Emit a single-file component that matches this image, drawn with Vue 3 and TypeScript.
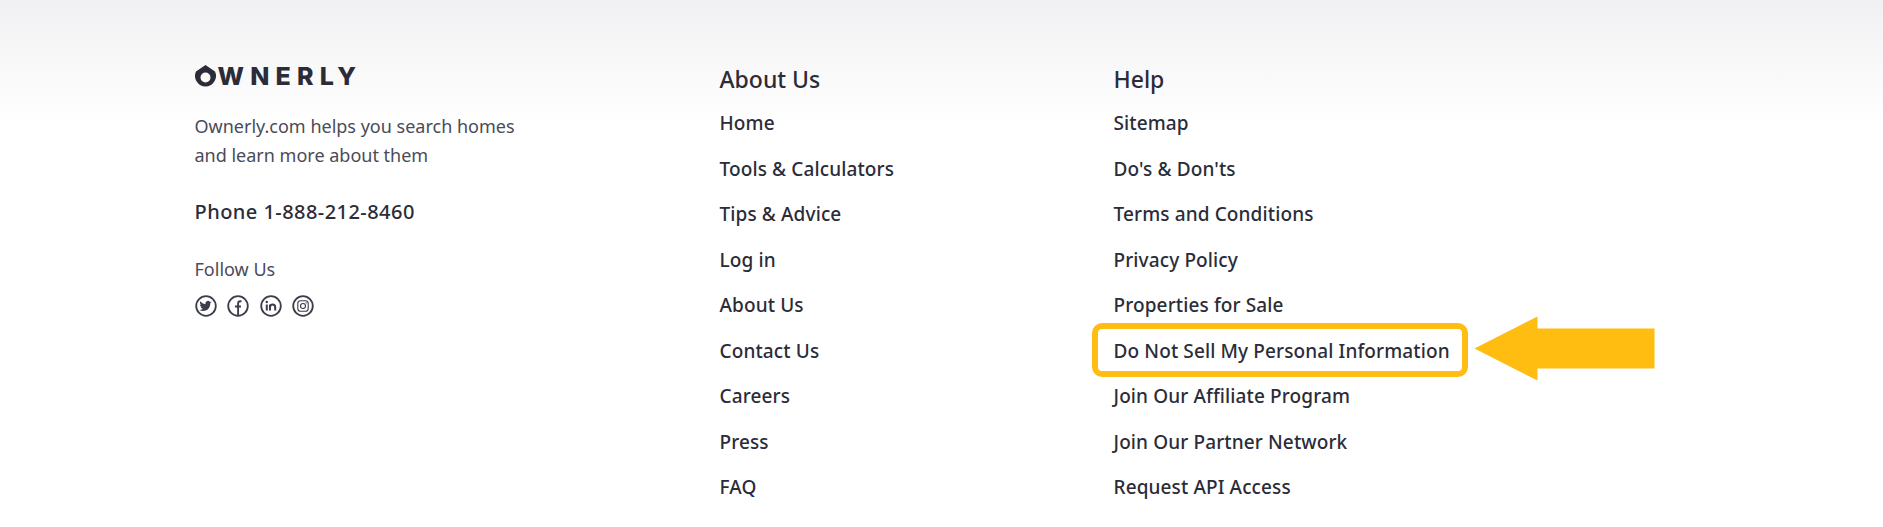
<script setup lang="ts">
const aboutLinks = [
  "Home",
  "Tools & Calculators",
  "Tips & Advice",
  "Log in",
  "About Us",
  "Contact Us",
  "Careers",
  "Press",
  "FAQ",
];

const helpLinks = [
  "Sitemap",
  "Do's & Don'ts",
  "Terms and Conditions",
  "Privacy Policy",
  "Properties for Sale",
  "Do Not Sell My Personal Information",
  "Join Our Affiliate Program",
  "Join Our Partner Network",
  "Request API Access",
];

const highlighted = "Do Not Sell My Personal Information";
</script>

<template>
  <footer class="footer">
    <div class="footer__brand">
      <div class="logo">
        <svg class="logo__mark" viewBox="0 0 21 23" width="21" height="23" aria-hidden="true">
          <path d="M10.500 0 L20 6.500 A10.500 10.500 0 1 1 1 6.500 Z M10.500 7.500 A5 5 0 1 0 10.500 17.500 A5 5 0 1 0 10.500 7.500 Z" fill="#2b2c38" fill-rule="evenodd" />
        </svg>
        <span class="logo__text">WNERLY</span>
      </div>
      <p class="footer__about">Ownerly.com helps you search homes<br />and learn more about them</p>
      <p class="footer__phone">Phone 1-888-212-8460</p>
      <p class="footer__follow">Follow Us</p>
      <div class="social">
        <svg viewBox="0 0 22 22" width="22" height="22" aria-label="Twitter">
          <circle cx="11" cy="11" r="9.800" class="social__ring" />
          <path d="M17 7.300c-.5.200-1 .4-1.500.4.500-.3 1-.8 1.200-1.400-.5.300-1.100.5-1.700.6a2.600 2.600 0 0 0-4.500 2.400C8.300 8.700 6.500 7.700 5.300 6.200c-.7 1.200-.3 2.700.8 3.500-.4 0-.8-.1-1.200-.3 0 1.200.9 2.300 2.100 2.600-.4.100-.8.100-1.200 0 .3 1 1.300 1.800 2.400 1.800-1.100.9-2.500 1.300-3.900 1.100 3.900 2.500 10.900 1 11-6.600.6-.4 1.200-1 1.700-1.300z" fill="#3c3d4b" />
        </svg>
        <svg viewBox="0 0 22 22" width="22" height="22" aria-label="Facebook">
          <circle cx="11" cy="11" r="9.800" class="social__ring" />
          <path d="M14.500 6.200h-1.200c-1.400 0-2.200.9-2.200 2.300V20.500M8 11.500h6" class="social__stroke" stroke-width="1.900" />
        </svg>
        <svg viewBox="0 0 22 22" width="22" height="22" aria-label="LinkedIn">
          <circle cx="11" cy="11" r="9.800" class="social__ring" />
          <path d="M6.800 9.500v6M10 9.500v6M10 12.300c0-3.600 5.200-3.600 5.200 0v3.200" class="social__stroke" stroke-width="2" />
          <circle cx="6.800" cy="7" r="1.200" fill="#3c3d4b" />
        </svg>
        <svg viewBox="0 0 22 22" width="22" height="22" aria-label="Instagram">
          <circle cx="11" cy="11" r="9.800" class="social__ring" />
          <rect x="5.800" y="5.800" width="10.400" height="10.400" rx="2.800" class="social__stroke" stroke-width="1.100" />
          <circle cx="11" cy="11" r="2.500" class="social__stroke" stroke-width="1.100" />
          <circle cx="14.100" cy="7.900" r=".6" fill="#3c3d4b" />
        </svg>
      </div>
    </div>

    <nav class="footer__col footer__col--about">
      <h3 class="footer__title">About Us</h3>
      <a v-for="link in aboutLinks" :key="link" class="footer__link">{{ link }}</a>
    </nav>

    <nav class="footer__col">
      <h3 class="footer__title">Help</h3>
      <a
        v-for="link in helpLinks"
        :key="link"
        :class="['footer__link', { 'footer__link--marked': link === highlighted }]"
      >{{ link }}</a>
    </nav>
  </footer>
</template>

<style>
html,
body {
  margin: 0;
  background: #fff;
}
</style>

<style scoped>
.footer {
  display: grid;
  grid-template-columns: 525px 394px 1fr;
  box-sizing: border-box;
  height: 527px;
  padding: 60px 0 0 194.500px;
  overflow: hidden;
  color: #2b2c38;
  font-family: "Noto Sans", "Liberation Sans", sans-serif;
  background: linear-gradient(#f1f1f3 0, #fff 125px);
}

.footer__brand {
  display: flex;
  flex-direction: column;
  align-items: flex-start;
}

.logo {
  display: flex;
  align-items: flex-end;
  gap: 2px;
  height: 27px;
  margin-top: 1px;
}

.logo__text {
  font-family: Inter, "Liberation Sans", sans-serif;
  font-size: 25px;
  line-height: 23px;
  font-weight: 800;
  letter-spacing: 6.200px;
}

.footer__about {
  margin: 23.500px 0 0;
  color: #4a4b58;
  font-size: 18px;
  line-height: 29px;
}

.footer__phone {
  margin: 27px 0 0;
  font-size: 20px;
  line-height: 30px;
  font-weight: 500;
  letter-spacing: .45px;
}

.footer__follow {
  margin: 27px 0 0;
  color: #4a4b58;
  font-size: 18px;
  line-height: 30px;
}

.social {
  display: flex;
  gap: 10.500px;
  margin-top: 11px;
}

.social__ring,
.social__stroke {
  fill: none;
  stroke: #3c3d4b;
}

.social__ring {
  stroke-width: 1.800;
}

.footer__col {
  display: flex;
  flex-direction: column;
  align-items: flex-start;
}

.footer__title {
  margin: 0 0 2px;
  font-size: 23px;
  font-weight: 500;
  line-height: 39px;
}

.footer__link {
  position: relative;
  font-size: 19px;
  font-weight: 500;
  line-height: 45.500px;
  letter-spacing: .12px;
  white-space: nowrap;
}

/* yellow callout over the link */
.footer__link--marked::before {
  content: "";
  position: absolute;
  top: -1px;
  left: -22px;
  width: 376px;
  height: 54px;
  margin-top: -5px;
  box-sizing: border-box;
  border: 6px solid #ffbc11;
  border-radius: 10px;
}

.footer__link--marked::after {
  content: "";
  position: absolute;
  top: -12px;
  left: 361px;
  width: 180px;
  height: 64px;
  background: #ffbc11;
  clip-path: polygon(0 50%, 63px 0, 63px 12px, 180px 12px, 180px 52px, 63px 52px, 63px 100%);
}
</style>
